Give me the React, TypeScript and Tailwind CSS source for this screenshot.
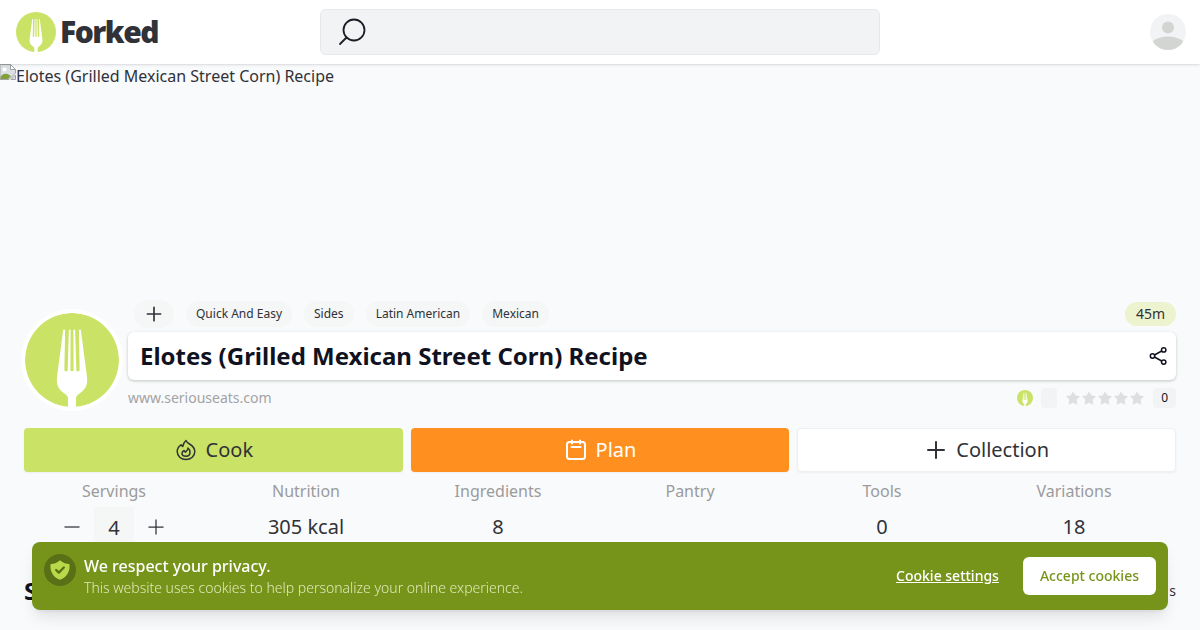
import type { ReactNode } from 'react';

const tags = ['Quick And Easy', 'Sides', 'Latin American', 'Mexican'];

const stats = [
  { label: 'Nutrition', value: '305 kcal' },
  { label: 'Ingredients', value: '8' },
  { label: 'Pantry', value: '' },
  { label: 'Tools', value: '0' },
  { label: 'Variations', value: '18' },
];

function ForkLogo({ className }: { className: string }) {
  return (
    <svg viewBox="0 0 96 96" className={className} aria-hidden="true">
      <circle cx="48" cy="48" r="48" fill="#cae265" />
      <path
        fill="#fff"
        d="M39 17 H41 L40.200 58 a1.700 1.700 0 0 0 3.400 0 L44.800 17 H46.600 L46.400 58 a1.600 1.600 0 0 0 3.200 0 L49.400 17 H51.200 L52.400 58 a1.700 1.700 0 0 0 3.400 0 L55 17 H57 L63.300 65 C64.300 75 61 78 56 82 C53.500 84 52 85 52 88 V96 H44 V88 C44 85 42.500 84 40 82 C35 78 31.700 75 32.700 65 Z"
      />
    </svg>
  );
}

function BrokenImage() {
  return (
    <svg viewBox="0 0 16 16" className="size-4 shrink-0" aria-hidden="true">
      <path d="M0 .5 H10.500 L15.500 5.500 V9 L9 15.500 H0 Z" fill="#dbe0e6" stroke="#a3a3a3" />
      <path d="M.5 15 V13 C3 9 7 9 10 11.500 L11 12 L8 15 Z" fill="#7fa03a" />
      <circle cx="4.500" cy="5.500" r="2" fill="#fff" />
      <path d="M10.500 .5 V5.500 H15.500 Z" fill="#fff" stroke="#a3a3a3" />
      <path d="M15.500 11 V15.500 H11 Z" fill="#dbe0e6" stroke="#a3a3a3" />
    </svg>
  );
}

function PlusIcon({ className }: { className: string }) {
  return (
    <svg viewBox="0 0 24 24" className={className} fill="none" stroke="currentColor" strokeWidth="2" strokeLinecap="round" aria-hidden="true">
      <path d="M12 4 V20 M4 12 H20" />
    </svg>
  );
}

function Star() {
  return (
    <svg viewBox="0 0 24 24" className="size-4 text-[#dedfe0]" fill="currentColor" aria-hidden="true">
      <path d="M12 2 L15.300 8 L22.500 9.500 L17.500 14.800 L18.500 22 L12 19 L5.500 22 L6.500 14.800 L1.500 9.500 L8.700 8 Z" />
    </svg>
  );
}

function Stat({ label, children }: { label: string; children: ReactNode }) {
  return (
    <div className="mr-3 flex flex-1 flex-col items-center">
      <span className="leading-6 text-[#9b9b9b]">{label}</span>
      <div className="mt-1 flex h-10 items-center text-xl">{children}</div>
    </div>
  );
}

export default function App() {
  return (
    <div className="min-h-screen bg-[#f9fafc] font-['Noto_Sans',sans-serif] text-[#303238]">
      <header className="relative flex h-16 items-center justify-between bg-white px-4 shadow">
        <a href="#" className="flex flex-1 items-center gap-1">
          <ForkLogo className="size-10" />
          <span className="font-['Open_Sans',sans-serif] text-3xl font-extrabold tracking-tighter">Forked</span>
        </a>
        <form className="flex h-[46px] w-full max-w-[560px] items-center rounded-md border border-[#e5e7eb] bg-[#f2f3f5] px-4">
          <svg viewBox="0 0 32 32" className="size-8 shrink-0 text-[#1b1d26]" fill="none" stroke="currentColor" strokeWidth="1.800" strokeLinecap="round" aria-hidden="true">
            <circle cx="17" cy="14" r="10.500" />
            <path d="M9.500 21.500 L3 28" />
          </svg>
          <input type="search" aria-label="Search" className="min-w-0 flex-1 bg-transparent px-2 outline-none" />
        </form>
        <div className="flex flex-1 justify-end">
          <button type="button" aria-label="Account" className="-mr-0.5 size-9 overflow-hidden rounded-full bg-[#f2f3f5]">
            <svg viewBox="0 0 36 36" className="size-9" fill="#d3d5d3" aria-hidden="true">
              <circle cx="18" cy="13.500" r="6" />
              <path d="M3 27 C10 21 26 21 33 27 L30 36 H6 Z" />
            </svg>
          </button>
        </div>
      </header>

      <div className="flex h-[236px] items-start">
        <BrokenImage />
        <span className="leading-6">Elotes (Grilled Mexican Street Corn) Recipe</span>
      </div>

      <main className="px-6">
        <div className="flex items-end gap-2">
          <ForkLogo className="size-24 shrink-0 rounded-full bg-white p-px ring-3 ring-white" />
          <div className="min-w-0 flex-1">
            <div className="flex h-7 items-center justify-between pl-1.5">
              <div className="flex items-center gap-3">
                <button type="button" aria-label="Add tag" className="flex h-7 w-10 items-center justify-center rounded-full bg-[#f5f6f6]">
                  <PlusIcon className="size-5" />
                </button>
                {tags.map((tag) => (
                  <a key={tag} href="#" className="rounded-full bg-[#f5f6f6] px-2.5 py-1 text-xs leading-[18px]">
                    {tag}
                  </a>
                ))}
              </div>
              <span className="rounded-full bg-[#edf3cf] px-[11px] text-sm leading-6">45m</span>
            </div>
            <div className="mt-1 flex h-12 items-center justify-between rounded-md bg-white pr-2 pl-3 text-[#10131f] shadow-[0_1px_3px_rgba(60,70,50,0.3)]">
              <h1 className="text-2xl font-bold">Elotes (Grilled Mexican Street Corn) Recipe</h1>
              <button type="button" aria-label="Share">
                <svg viewBox="0 0 20 20" className="size-5" fill="none" stroke="currentColor" strokeWidth="1.500" aria-hidden="true">
                  <circle cx="4.500" cy="10" r="2.200" />
                  <circle cx="15.700" cy="3.900" r="2.200" />
                  <circle cx="15.700" cy="16.100" r="2.200" />
                  <path d="M6.400 9 L13.700 5 M6.400 11 L13.700 15" />
                </svg>
              </button>
            </div>
            <div className="mt-2 flex h-5 items-center justify-between">
              <a href="#" className="text-sm text-[#a3a3a3]">www.seriouseats.com</a>
              <div className="flex items-center">
                <ForkLogo className="size-4" />
                <span className="ml-2 h-5 w-4 rounded bg-[#f2f3f5]" />
                <div className="ml-2 flex">
                  <Star />
                  <Star />
                  <Star />
                  <Star />
                  <Star />
                </div>
                <span className="ml-2 rounded bg-[#f2f3f5] px-2 text-xs leading-5 text-[#10131f]">0</span>
              </div>
            </div>
          </div>
        </div>

        <div className="mt-5 grid grid-cols-3 gap-2 text-xl">
          <button type="button" className="flex h-11 items-center justify-center gap-2 rounded bg-[#cae265] shadow-xs">
            <svg viewBox="0 0 24 24" className="size-6" fill="none" stroke="currentColor" strokeWidth="1.500" strokeLinecap="round" strokeLinejoin="round" aria-hidden="true">
              <path d="M12 2.500 C10.200 4 9.200 6 8.800 8.500 C8 8.200 7.500 7.500 7 6.800 C4.500 8.500 3.200 10.500 3.200 13.500 C3.200 18 7 21.500 12 21.500 S20.800 18 20.800 13.500 C20.800 10 18.500 7.800 15.500 6 C13.700 5 12.600 4 12 2.500 Z" />
              <path d="M14 10 C14.200 12 12.500 12.800 11.500 14.200 C10.900 13.800 10.500 13.200 10.200 12.500 C8.600 13.300 8 14.200 8 15.200 C8 17 9.800 18.200 12 18.200 S16 16.800 16 14.500 C16 12.600 15.300 11 14 10 Z" />
            </svg>
            Cook
          </button>
          <button type="button" className="flex h-11 items-center justify-center gap-2 rounded bg-[#ff9020] text-white shadow-xs">
            <svg viewBox="0 0 24 24" className="size-6" fill="none" stroke="currentColor" strokeWidth="2" strokeLinecap="round" aria-hidden="true">
              <rect x="3" y="4" width="18" height="17" rx="2.500" />
              <path d="M8 2.500 V5.500 M16 2.500 V5.500 M7.500 9 H16.500" />
            </svg>
            Plan
          </button>
          <button type="button" className="flex h-11 items-center justify-center gap-2 rounded border border-[#eeeff0] bg-white shadow-xs">
            <PlusIcon className="size-6" />
            Collection
          </button>
        </div>

        <div className="mt-[7px] flex">
          <Stat label="Servings">
            <button type="button" aria-label="Fewer servings" className="flex h-10 w-11 items-center justify-center">
              <svg viewBox="0 0 24 24" className="size-5" fill="none" stroke="currentColor" strokeWidth="1.500" aria-hidden="true">
                <path d="M3 12 H21" />
              </svg>
            </button>
            <input aria-label="Servings" defaultValue="4" className="h-10 w-10 bg-[#f5f6f6] text-center outline-none" />
            <button type="button" aria-label="More servings" className="flex h-10 w-11 items-center justify-center">
              <svg viewBox="0 0 24 24" className="size-5" fill="none" stroke="currentColor" strokeWidth="1.500" aria-hidden="true">
                <path d="M12 3 V21 M3 12 H21" />
              </svg>
            </button>
          </Stat>
          {stats.map((s) => (
            <Stat key={s.label} label={s.label}>
              {s.value}
            </Stat>
          ))}
        </div>

        <div className="mt-7 flex items-center justify-between">
          <h2 className="text-2xl font-bold text-[#10131f]">S</h2>
          <span className="text-sm">s</span>
        </div>
      </main>

      <div className="fixed inset-x-8 bottom-5 flex items-center justify-between rounded-lg bg-[#77941a] p-3 text-white shadow-lg">
        <div className="flex items-start gap-2">
          <span className="flex size-8 items-center justify-center rounded-full bg-[#5a7016]">
            <svg viewBox="0 0 20 20" className="size-6" aria-hidden="true">
              <path fill="#b8d94a" d="M10 1.800 C12 3.700 14.600 4.800 17.800 5 C18.800 11 15.500 16.300 10 18.200 C4.500 16.300 1.200 11 2.200 5 C5.400 4.800 8 3.700 10 1.800 Z" />
              <path d="M6.800 10 L9 12.200 L13.200 7.900" fill="none" stroke="#5a7016" strokeWidth="1.900" strokeLinecap="round" strokeLinejoin="round" />
            </svg>
          </span>
          <div>
            <p className="font-medium leading-6">We respect your privacy.</p>
            <p className="text-sm leading-5 font-light text-[#dfe9b8]">This website uses cookies to help personalize your online experience.</p>
          </div>
        </div>
        <div className="flex items-center gap-6 text-sm">
          <a href="#" className="font-medium underline">Cookie settings</a>
          <button type="button" className="rounded-md border border-transparent bg-white px-4 py-2 leading-5 font-medium text-[#77941a]">Accept cookies</button>
        </div>
      </div>
    </div>
  );
}
